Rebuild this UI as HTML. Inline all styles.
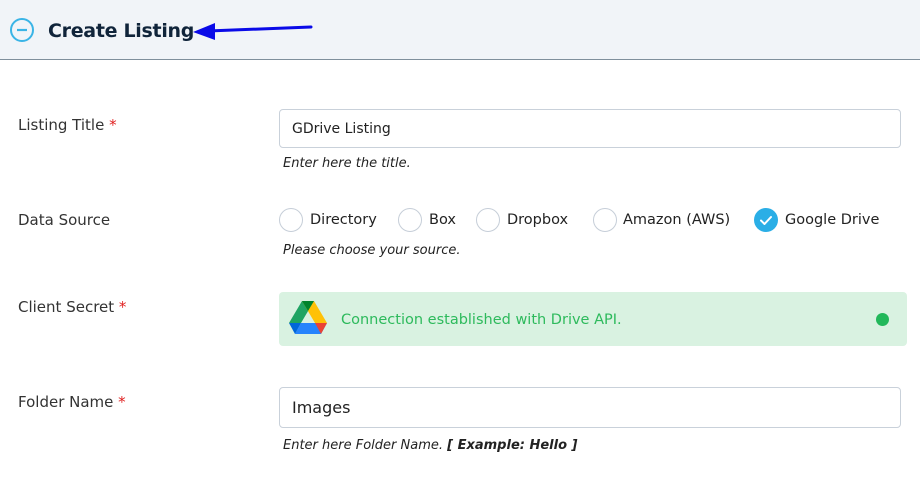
<!DOCTYPE html>
<html><head><style>
*{margin:0;padding:0;box-sizing:border-box}
body{width:920px;height:477px;background:#fff;font-family:"DejaVu Sans","Liberation Sans",sans-serif;color:#222;position:relative;overflow:hidden}
.abs{position:absolute}
.hdr{left:0;top:0;width:920px;height:60px;background:#f1f4f8;border-bottom:1px solid #7f8f9c}
.lbl{left:18px;font-size:15px;color:#333;white-space:nowrap}
.req{color:#e02020}
.inp{left:279px;width:622px;border:1px solid #c9d1da;border-radius:4px;background:#fff;padding-left:12px;display:flex;align-items:center;color:#222}
.help{left:283px;font-size:13px;font-style:italic;color:#222;white-space:nowrap}
.rad{width:24px;height:24px;border:1px solid #c6ced8;border-radius:50%;top:208px;background:#fff}
.rt{top:212px;font-size:14.5px;color:#222;white-space:nowrap}
</style></head><body>
<div class="abs hdr"></div>
<svg class="abs" style="left:9px;top:17px" width="26" height="26"><circle cx="13" cy="13" r="11" fill="none" stroke="#3ab4e6" stroke-width="2"/><line x1="8" y1="13" x2="18" y2="13" stroke="#3ab4e6" stroke-width="2.2"/></svg>
<div class="abs" style="left:48px;top:20px;font-size:19px;font-weight:bold;color:#10243a;letter-spacing:-0.3px">Create Listing</div>
<svg class="abs" style="left:190px;top:18px" width="130" height="24"><line x1="18" y1="13" x2="121" y2="9" stroke="#0a0ae8" stroke-width="3" stroke-linecap="round"/><polygon points="3,14 25,5 25,22" fill="#0a0ae8"/></svg>

<div class="abs lbl" style="top:116px">Listing Title <span class="req">*</span></div>
<div class="abs inp" style="top:109px;height:39px;font-size:14px">GDrive Listing</div>
<div class="abs help" style="top:156px">Enter here the title.</div>

<div class="abs lbl" style="top:211px">Data Source</div>
<div class="abs rad" style="left:279px"></div><div class="abs rt" style="left:310px">Directory</div>
<div class="abs rad" style="left:398px"></div><div class="abs rt" style="left:429px">Box</div>
<div class="abs rad" style="left:476px"></div><div class="abs rt" style="left:507px">Dropbox</div>
<div class="abs rad" style="left:593px"></div><div class="abs rt" style="left:623px">Amazon (AWS)</div>
<svg class="abs" style="left:754px;top:208px" width="24" height="24"><circle cx="12" cy="12" r="12" fill="#2aaee6"/><path d="M7 12.5l3.5 3.5 6.5-7" fill="none" stroke="#fff" stroke-width="2" stroke-linecap="round" stroke-linejoin="round"/></svg>
<div class="abs rt" style="left:785px">Google Drive</div>
<div class="abs help" style="top:243px">Please choose your source.</div>

<div class="abs lbl" style="top:298px">Client Secret <span class="req">*</span></div>
<div class="abs" style="left:279px;top:292px;width:628px;height:54px;background:#d9f2e1;border-radius:4px"></div>
<svg class="abs" style="left:288px;top:298px" width="40" height="40" viewBox="0 0 40 38">
<polygon points="14,2 26,2 13,24 1,24" fill="#1fa463"/>
<polygon points="14,2 26,2 39,24 27,24" fill="#ffc107"/>
<polygon points="7,35 13,24 39,24 33,35" fill="#2684fc"/>
<polygon points="1,24 13,24 7,35" fill="#0066da"/>
<polygon points="27,24 39,24 33,35" fill="#ea4335"/>
<polygon points="14,2 26,2 20,12" fill="#00832d"/>
</svg>
<div class="abs" style="left:341px;top:312px;font-size:14.5px;color:#2dba5c;white-space:nowrap">Connection established with Drive API.</div>
<div class="abs" style="left:876px;top:313px;width:13px;height:13px;border-radius:50%;background:#22b85a"></div>

<div class="abs lbl" style="top:393px">Folder Name <span class="req">*</span></div>
<div class="abs inp" style="top:387px;height:41px;font-size:16px">Images</div>
<div class="abs help" style="top:438px">Enter here Folder Name. <b>[ Example: Hello ]</b></div>
</body></html>
